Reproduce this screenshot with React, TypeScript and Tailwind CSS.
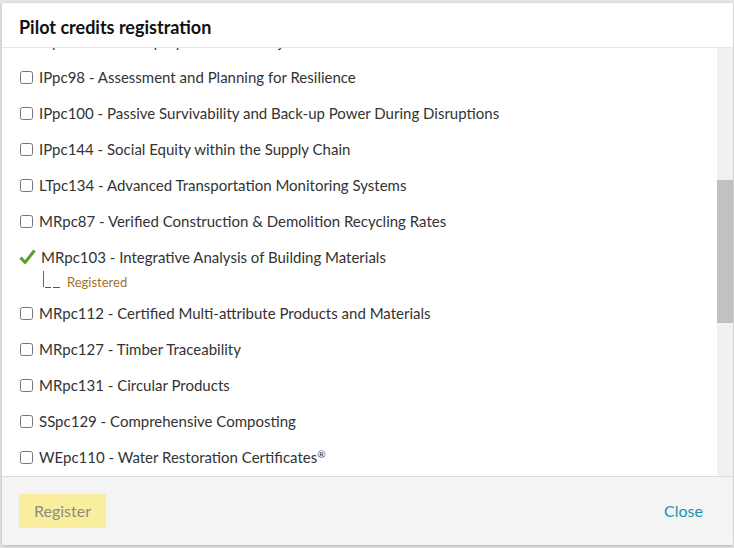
import { useEffect, useRef } from "react";

type Credit = { code: string; name: string; mark?: boolean; registered?: boolean };

const credits: Credit[] = [
  { code: "EApc95", name: "Alternative Energy Performance Metric" },
  { code: "EApc144", name: "Grid Harmonization" },
  { code: "EApc145", name: "Renewable Energy for Transportation" },
  { code: "EQpc68", name: "Daylight" },
  { code: "EQpc124", name: "Restricted Access to Outdoor Air" },
  { code: "EQpc126", name: "Acoustic Performance" },
  { code: "INpc24", name: "Social Equity within the Community" },
  { code: "INpc89", name: "Social Equity within the Project Team" },
  { code: "INpc145", name: "Clean Construction" },
  { code: "IPpc81", name: "Integrative Process for Health Promotion" },
  { code: "IPpc89", name: "Social Equity within the Project Team" },
  { code: "IPpc98", name: "Assessment and Planning for Resilience" },
  { code: "IPpc100", name: "Passive Survivability and Back-up Power During Disruptions" },
  { code: "IPpc144", name: "Social Equity within the Supply Chain" },
  { code: "LTpc134", name: "Advanced Transportation Monitoring Systems" },
  { code: "MRpc87", name: "Verified Construction & Demolition Recycling Rates" },
  { code: "MRpc103", name: "Integrative Analysis of Building Materials", registered: true },
  { code: "MRpc112", name: "Certified Multi-attribute Products and Materials" },
  { code: "MRpc127", name: "Timber Traceability" },
  { code: "MRpc131", name: "Circular Products" },
  { code: "SSpc129", name: "Comprehensive Composting" },
  { code: "WEpc110", name: "Water Restoration Certificates", mark: true },
  { code: "WEpc111", name: "Water Metering and Reporting" },
  { code: "WEpc112", name: "Sustainable Wastewater Management" },
  { code: "WEpc113", name: "Water Balance" },
  { code: "WEpc114", name: "Alternative Water Sources" },
  { code: "WEpc115", name: "Rainwater Harvesting" },
  { code: "WEpc116", name: "Graywater Reuse" },
];

function CheckMark() {
  return (
    <svg width="17" height="16" viewBox="0 0 17 16" className="shrink-0">
      <path d="M1.5 8.5 L6 13.5 L15.5 1.5" fill="none" stroke="#5a9e2c" strokeWidth="3" strokeLinejoin="round" />
    </svg>
  );
}

// └── connector under a registered credit
function TreeLine() {
  return (
    <svg width="20" height="17" viewBox="0 0 20 17" className="shrink-0">
      <line x1="0.5" y1="0" x2="0.5" y2="16" stroke="#666" strokeWidth="1" />
      <line x1="2" y1="16.5" x2="8" y2="16.5" stroke="#555" strokeWidth="1" />
      <line x1="10" y1="16.5" x2="17" y2="16.5" stroke="#555" strokeWidth="1" />
    </svg>
  );
}

function Label({ credit }: { credit: Credit }) {
  return (
    <span>
      {credit.code} - {credit.name}
      {credit.mark && <sup className="text-[10px] -top-[5px]">®</sup>}
    </span>
  );
}

function CreditRow({ credit }: { credit: Credit }) {
  if (credit.registered) {
    return (
      <div className="h-[56px] pt-[9px]">
        <div className="flex items-center gap-[5px] h-[18px]">
          <CheckMark />
          <Label credit={credit} />
        </div>
        <div className="flex items-start pl-[24px] mt-[5px]">
          <TreeLine />
          <span className="text-[13px] leading-[19px] text-[#a36f2a] ml-[4px] mt-[2px]">Registered</span>
        </div>
      </div>
    );
  }
  return (
    <label className="flex items-center h-[36px] gap-[6px]">
      <input type="checkbox" className="w-[13px] h-[13px] m-0 ml-[1px] shrink-0" />
      <Label credit={credit} />
    </label>
  );
}

export default function App() {
  const listRef = useRef<HTMLDivElement>(null);

  useEffect(() => {
    if (listRef.current) listRef.current.scrollTop = 395;
  }, []);

  return (
    <div className="w-[734px] h-[548px] bg-[#e9e9e9] pt-[3px] pl-[2px] pr-[1px] pb-[3px] font-['Lato',sans-serif]">
      <div className="h-full flex flex-col bg-white shadow-[0_1px_4px_rgba(0,0,0,0.25)]">
        <div className="h-[45px] shrink-0 border-b border-[#e6e6e6] flex items-center px-[17px] pt-[4px]">
          <h2 className="text-[18px] font-bold text-[#111]">Pilot credits registration</h2>
        </div>
        <div className="flex-1 min-h-0 flex">
          <div ref={listRef} className="flex-1 overflow-hidden px-[17px] py-[10px] text-[15px] text-[#333]">
            {credits.map((c) => (
              <CreditRow key={c.code} credit={c} />
            ))}
          </div>
          {/* scroll track */}
          <div className="w-[16px] shrink-0 bg-[#f1f1f1] pt-[132px]">
            <div className="h-[143px] bg-[#c1c1c1]" />
          </div>
        </div>
        <div className="h-[69px] shrink-0 bg-[#f4f4f4] border-t border-[#dcdcdc] flex items-center justify-between pl-[17px] pr-[30px]">
          <button className="h-[34px] px-[15px] bg-[#f9ee9e] text-[16px] text-[#8d8c80]">Register</button>
          <button className="text-[16px] text-[#1b93ae]">Close</button>
        </div>
      </div>
    </div>
  );
}
